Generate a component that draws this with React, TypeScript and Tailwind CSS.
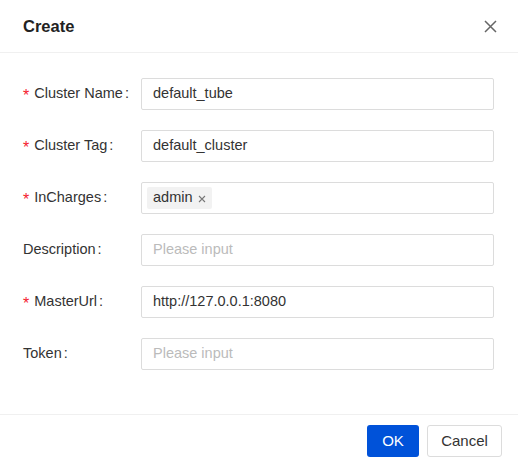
import React from 'react'

const fields = [
  { label: 'Cluster Name', required: true, value: 'default_tube' },
  { label: 'Cluster Tag', required: true, value: 'default_cluster' },
  { label: 'InCharges', required: true, tags: ['admin'] },
  { label: 'Description', required: false, placeholder: 'Please input' },
  { label: 'MasterUrl', required: true, value: 'http://127.0.0.1:8080' },
  { label: 'Token', required: false, placeholder: 'Please input' },
]

export default function App() {
  return (
    <div className="w-[518px] h-[464px] bg-white text-[#333] overflow-hidden" style={{ fontFamily: '"Liberation Sans", Arial, sans-serif' }}>
      {/* Header */}
      <div className="h-[53px] flex items-center justify-between pl-[23px] pr-[21px] border-b border-[#f0f0f0]">
        <span className="text-[16.5px] font-bold text-[#222]">Create</span>
        <svg width="13" height="13" viewBox="0 0 13 13" className="text-[#666]">
          <path d="M1 1L12 12M12 1L1 12" stroke="currentColor" strokeWidth="1.5" />
        </svg>
      </div>

      {/* Form */}
      <div className="pt-[25px] pb-[44px] pl-[23px] pr-[24px] flex flex-col gap-5">
        {fields.map((f) => (
          <div key={f.label} className="flex items-center h-8">
            <div className="w-[118px] flex items-center text-[14.5px] text-[#333]">
              {f.required && <span className="text-[#f5222d] mr-[5px] text-[16px] leading-none mt-[3px]">*</span>}
              <span>{f.label}</span>
              <span className="ml-[2px]">:</span>
            </div>
            <div className="flex-1 h-8 border border-[#dcdcdc] rounded-[2px] flex items-center px-[11px] text-[14.5px]">
              {f.tags ? (
                <div className="-ml-[6px] flex gap-1">
                  {f.tags.map((t) => (
                    <span key={t} className="h-[22px] bg-[#f2f2f2] rounded-[2px] pl-[6px] pr-[6px] flex items-center gap-[5px] text-[#333]">
                      {t}
                      <svg width="8" height="8" viewBox="0 0 8 8" className="text-[#777] mt-[2px]">
                        <path d="M1 1L7 7M7 1L1 7" stroke="currentColor" strokeWidth="1.1" />
                      </svg>
                    </span>
                  ))}
                </div>
              ) : f.value ? (
                <span className="text-[#333]">{f.value}</span>
              ) : (
                <span className="text-[#bbbbbb]">{f.placeholder}</span>
              )}
            </div>
          </div>
        ))}
      </div>

      {/* Footer */}
      <div className="border-t border-[#f0f0f0] flex justify-end gap-2 pt-[10px] pr-4">
        <button className="h-8 w-[52px] bg-[#0052d9] text-white rounded-[3px] text-[15px]">OK</button>
        <button className="h-8 w-[75px] bg-white border border-[#dcdcdc] text-[#333] rounded-[3px] text-[15px]">Cancel</button>
      </div>
    </div>
  )
}
